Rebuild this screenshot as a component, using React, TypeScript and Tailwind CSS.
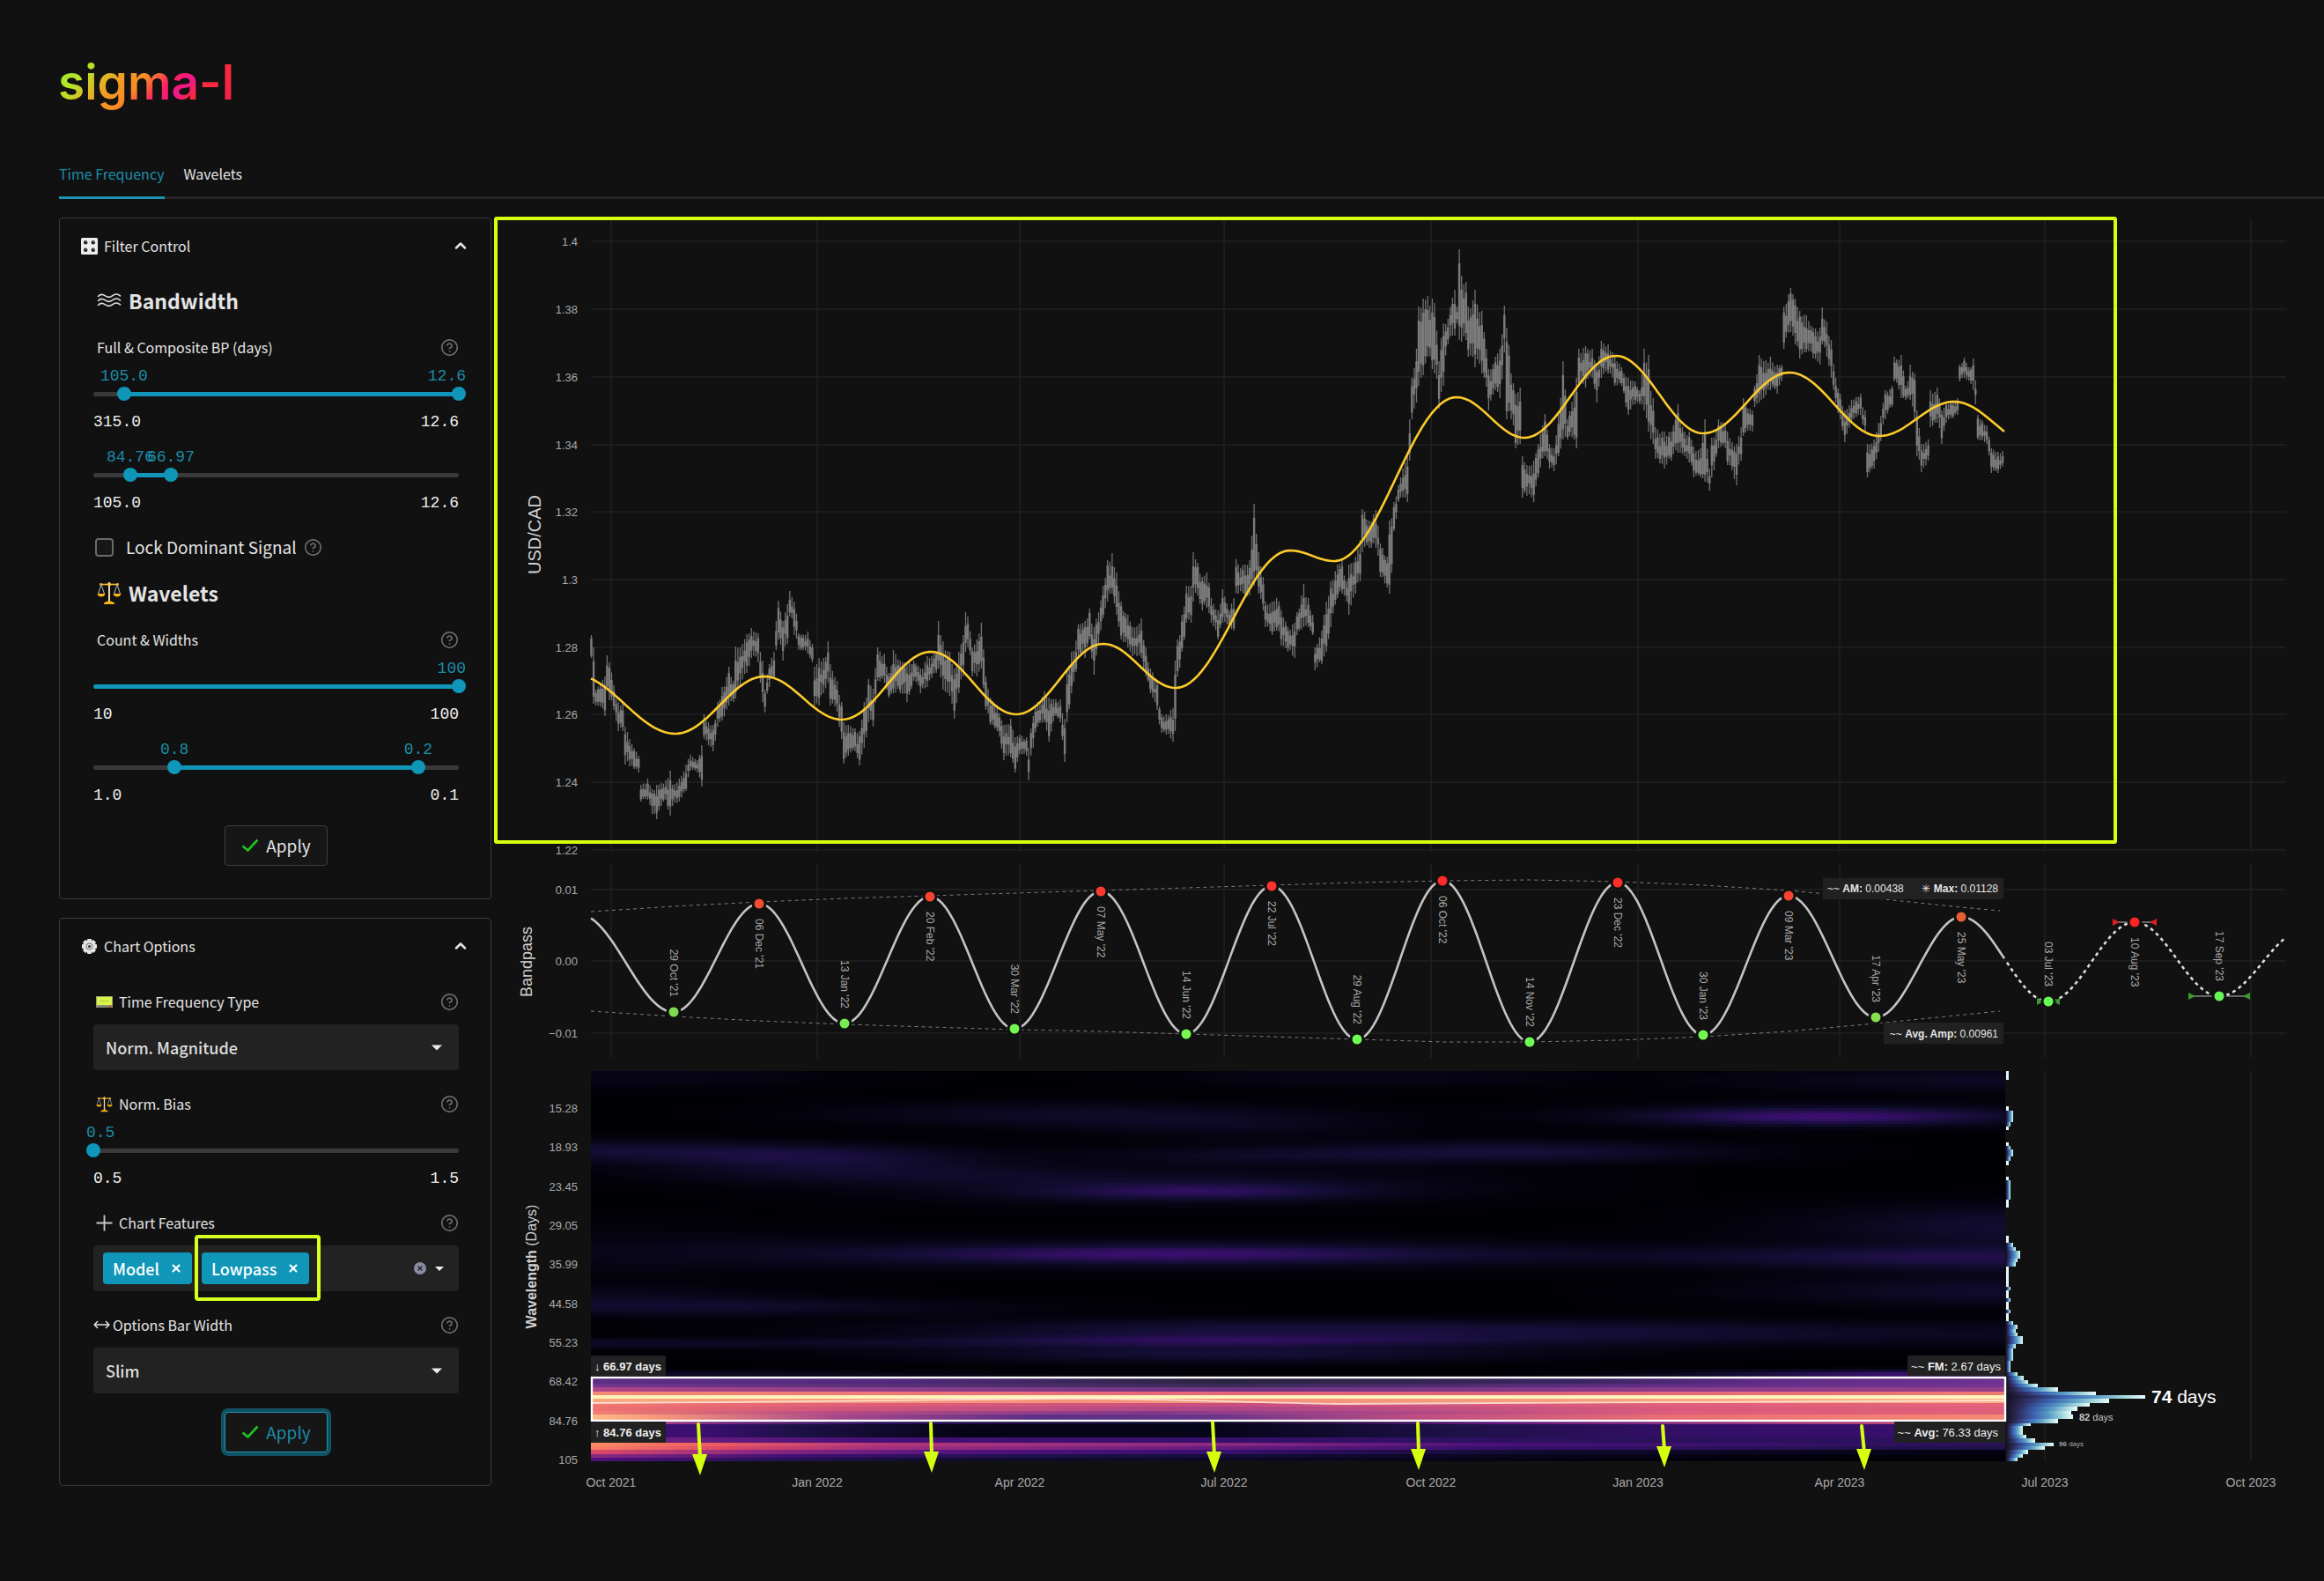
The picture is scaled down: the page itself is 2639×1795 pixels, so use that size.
import React, { useState } from 'react';
import { ChevronUp, HelpCircle, X } from 'lucide-react';

type Point = [number, number];

/* ------------------------------------------------------------------ */
/* chart data                                                          */
/* ------------------------------------------------------------------ */

const PLOT_LEFT = 671;
const PLOT_RIGHT = 2596;
const DATA_RIGHT = 2277;

const MONTHS: { x: number; label: string }[] = [
  { x: 694, label: 'Oct 2021' },
  { x: 928, label: 'Jan 2022' },
  { x: 1158, label: 'Apr 2022' },
  { x: 1390, label: 'Jul 2022' },
  { x: 1625, label: 'Oct 2022' },
  { x: 1860, label: 'Jan 2023' },
  { x: 2089, label: 'Apr 2023' },
  { x: 2322, label: 'Jul 2023' },
  { x: 2556, label: 'Oct 2023' },
];

const PRICE_TICKS: { y: number; label: string }[] = [
  { y: 274, label: '1.4' },
  { y: 351, label: '1.38' },
  { y: 428, label: '1.36' },
  { y: 505, label: '1.34' },
  { y: 581, label: '1.32' },
  { y: 658, label: '1.3' },
  { y: 735, label: '1.28' },
  { y: 811, label: '1.26' },
  { y: 888, label: '1.24' },
  { y: 965, label: '1.22' },
];

const BANDPASS_TICKS = [
  { y: 1010, label: '0.01' },
  { y: 1091, label: '0.00' },
  { y: 1173, label: '−0.01' },
];

const WAVELENGTH_TICKS = [
  { y: 1258, label: '15.28' },
  { y: 1302, label: '18.93' },
  { y: 1347, label: '23.45' },
  { y: 1391, label: '29.05' },
  { y: 1435, label: '35.99' },
  { y: 1480, label: '44.58' },
  { y: 1524, label: '55.23' },
  { y: 1568, label: '68.42' },
  { y: 1613, label: '84.76' },
  { y: 1657, label: '105' },
];

// x, high, low
const PRICE_RANGE: [number, number, number][] = [
  [671, 721, 747], [673, 735, 799], [677, 783, 801], [681, 776, 802], [686, 768, 813], [689, 744, 783],
  [693, 752, 795], [697, 778, 806], [701, 797, 830], [707, 797, 830], [711, 825, 868], [716, 839, 870],
  [725, 858, 877], [728, 891, 910], [736, 884, 908], [741, 896, 924], [745, 891, 930], [752, 889, 915],
  [756, 886, 908], [760, 875, 926], [763, 891, 915], [772, 884, 910], [779, 868, 898], [783, 857, 875],
  [792, 863, 877], [796, 846, 893], [800, 811, 839], [805, 820, 846], [811, 823, 853], [815, 797, 825],
  [821, 780, 818], [828, 757, 801], [832, 773, 797], [836, 734, 793], [841, 735, 778], [848, 720, 764],
  [854, 713, 747], [861, 719, 752], [865, 750, 797], [868, 783, 809], [873, 754, 780], [878, 740, 771],
  [882, 705, 738], [885, 682, 726], [889, 705, 750], [893, 686, 731], [898, 671, 700], [903, 683, 721],
  [908, 719, 738], [917, 717, 742], [922, 731, 752], [926, 757, 801], [930, 747, 801], [936, 747, 787],
  [941, 728, 775], [944, 754, 801], [950, 773, 808], [955, 797, 839], [958, 820, 867], [964, 823, 858],
  [970, 827, 853], [975, 830, 869], [982, 797, 849], [987, 771, 820], [992, 782, 825], [996, 735, 773],
  [1004, 742, 775], [1009, 764, 792], [1015, 738, 787], [1022, 750, 787], [1031, 752, 797], [1038, 750, 773],
  [1046, 759, 787], [1053, 745, 780], [1062, 740, 764], [1066, 705, 759], [1071, 728, 783], [1078, 740, 790],
  [1084, 759, 816], [1089, 740, 787], [1093, 721, 768], [1097, 695, 740], [1100, 700, 735], [1104, 735, 768],
  [1110, 726, 768], [1115, 707, 759], [1119, 768, 806], [1125, 792, 823], [1133, 801, 830], [1140, 823, 863],
  [1147, 816, 860], [1153, 837, 877], [1158, 834, 856], [1165, 837, 858], [1168, 849, 886], [1172, 813, 849],
  [1178, 797, 825], [1185, 785, 820], [1191, 792, 842], [1198, 794, 813], [1205, 794, 820], [1208, 816, 865],
  [1212, 761, 820], [1218, 740, 787], [1225, 709, 747], [1232, 705, 747], [1237, 691, 726], [1242, 712, 766],
  [1247, 695, 731], [1253, 665, 702], [1258, 636, 683], [1262, 628, 674], [1268, 650, 698], [1273, 683, 726],
  [1280, 698, 735], [1287, 712, 745], [1295, 702, 747], [1300, 735, 768], [1307, 759, 787], [1313, 773, 806],
  [1318, 811, 832], [1325, 811, 834], [1331, 804, 842], [1334, 750, 830], [1338, 726, 768], [1343, 698, 740],
  [1348, 665, 707], [1352, 665, 707], [1355, 627, 683], [1359, 639, 676], [1365, 655, 693], [1371, 650, 690],
  [1376, 679, 707], [1383, 693, 726], [1389, 669, 707], [1396, 693, 712], [1400, 679, 716], [1402, 627, 679],
  [1407, 641, 674], [1414, 641, 679], [1420, 636, 676], [1423, 572, 665], [1426, 606, 655], [1430, 627, 674],
  [1434, 655, 693], [1438, 683, 712], [1445, 683, 721], [1451, 679, 716], [1456, 693, 733], [1463, 712, 740],
  [1469, 707, 747], [1474, 695, 721], [1480, 663, 712], [1485, 679, 712], [1490, 698, 721], [1494, 735, 761],
  [1500, 716, 754], [1506, 683, 740], [1512, 660, 712], [1518, 641, 679], [1523, 634, 674], [1528, 660, 683],
  [1532, 641, 698], [1539, 632, 674], [1545, 613, 660], [1548, 578, 627], [1555, 591, 622], [1563, 579, 622],
  [1568, 617, 655], [1575, 632, 667], [1579, 591, 674], [1584, 570, 603], [1588, 551, 570], [1593, 532, 565],
  [1597, 514, 570], [1600, 476, 523], [1604, 429, 476], [1608, 396, 457], [1612, 348, 438], [1617, 339, 426],
  [1622, 336, 405], [1627, 339, 419], [1630, 344, 424], [1634, 410, 464], [1638, 367, 438], [1644, 362, 391],
  [1651, 329, 381], [1654, 348, 367], [1656, 283, 386], [1659, 313, 388], [1665, 320, 386], [1668, 348, 405],
  [1676, 329, 417], [1682, 353, 424], [1686, 377, 429], [1691, 419, 466], [1697, 405, 443], [1704, 396, 452],
  [1709, 347, 400], [1712, 372, 476], [1717, 424, 476], [1722, 447, 509], [1726, 440, 504], [1729, 518, 565],
  [1735, 528, 563], [1741, 523, 570], [1746, 504, 542], [1754, 470, 518], [1760, 504, 532], [1764, 509, 535],
  [1771, 471, 518], [1775, 410, 499], [1780, 476, 499], [1787, 447, 499], [1790, 429, 509], [1793, 396, 438],
  [1800, 393, 440], [1807, 396, 429], [1813, 414, 457], [1819, 387, 429], [1827, 391, 424], [1834, 403, 438],
  [1842, 417, 438], [1848, 429, 471], [1856, 433, 459], [1863, 443, 459], [1866, 396, 466], [1871, 403, 490],
  [1876, 452, 504], [1880, 485, 521], [1889, 490, 532], [1898, 490, 523], [1905, 459, 514], [1912, 490, 518],
  [1918, 490, 525], [1924, 507, 542], [1930, 509, 542], [1936, 476, 547], [1941, 532, 557], [1945, 497, 542],
  [1952, 476, 509], [1959, 481, 509], [1963, 490, 528], [1971, 504, 551], [1976, 485, 523], [1979, 452, 495],
  [1989, 466, 490], [1993, 438, 462], [1997, 403, 457], [2003, 410, 452], [2010, 405, 443], [2017, 414, 447],
  [2023, 414, 433], [2026, 348, 396], [2033, 327, 377], [2039, 339, 391], [2043, 353, 407], [2051, 358, 400],
  [2060, 372, 407], [2066, 372, 414], [2069, 349, 391], [2074, 365, 405], [2079, 386, 429], [2084, 429, 457],
  [2089, 447, 476], [2095, 466, 502], [2102, 454, 480], [2112, 447, 471], [2117, 466, 490], [2121, 504, 542],
  [2128, 499, 532], [2134, 480, 513], [2140, 443, 476], [2149, 438, 462], [2152, 405, 433], [2158, 403, 452],
  [2165, 438, 454], [2170, 414, 454], [2174, 424, 476], [2177, 466, 518], [2183, 504, 536], [2190, 499, 523],
  [2193, 443, 485], [2201, 440, 480], [2204, 466, 504], [2211, 457, 480], [2223, 452, 471], [2226, 414, 433],
  [2230, 406, 429], [2237, 417, 436], [2242, 407, 443], [2246, 471, 499], [2256, 483, 504], [2262, 509, 537],
  [2270, 513, 537], [2276, 511, 528],
];

const LOWPASS_TURNS: Point[] = [
  [652, 766], [767, 833], [868, 768], [956, 817], [1057, 740], [1154, 811], [1253, 731], [1335, 781],
  [1465, 625], [1515, 637], [1654, 451], [1731, 497], [1835, 404], [1934, 492], [2032, 423], [2134, 495],
  [2219, 456], [2310, 505],
];

interface Turn {
  x: number;
  y: number;
  date: string;
  kind: 'peak' | 'trough';
  color: string;
  spread?: number;
}

const TURNS: Turn[] = [
  { x: 765, y: 1149, date: "29 Oct '21", kind: 'trough', color: '#7fdc50' },
  { x: 862, y: 1026, date: "06 Dec '21", kind: 'peak', color: '#f0502f' },
  { x: 959, y: 1162, date: "13 Jan '22", kind: 'trough', color: '#78ec50' },
  { x: 1056, y: 1018, date: "20 Feb '22", kind: 'peak', color: '#f8442f' },
  { x: 1152, y: 1168, date: "30 Mar '22", kind: 'trough', color: '#75f550' },
  { x: 1250, y: 1012, date: "07 May '22", kind: 'peak', color: '#fb3b2e' },
  { x: 1347, y: 1174, date: "14 Jun '22", kind: 'trough', color: '#74f951' },
  { x: 1444, y: 1006, date: "22 Jul '22", kind: 'peak', color: '#fd332d' },
  { x: 1541, y: 1180, date: "29 Aug '22", kind: 'trough', color: '#70fd52' },
  { x: 1638, y: 1000, date: "06 Oct '22", kind: 'peak', color: '#ff2a2a' },
  { x: 1737, y: 1183, date: "14 Nov '22", kind: 'trough', color: '#6dff55' },
  { x: 1837, y: 1002, date: "23 Dec '22", kind: 'peak', color: '#fe2e2b' },
  { x: 1934, y: 1175, date: "30 Jan '23", kind: 'trough', color: '#74f951' },
  { x: 2031, y: 1017, date: "09 Mar '23", kind: 'peak', color: '#f8442f' },
  { x: 2130, y: 1155, date: "17 Apr '23", kind: 'trough', color: '#85e050' },
  { x: 2227, y: 1041, date: "25 May '23", kind: 'peak', color: '#e65f35' },
  { x: 2326, y: 1137, date: "03 Jul '23", kind: 'trough', color: '#66ff55', spread: 10 },
  { x: 2424, y: 1047, date: "10 Aug '23", kind: 'peak', color: '#ff2222', spread: 22 },
  { x: 2520, y: 1131, date: "17 Sep '23", kind: 'trough', color: '#66f555', spread: 32 },
];

const BANDPASS_WAVE: Point[] = [
  [657, 1038],
  ...TURNS.map((t): Point => [t.x, t.y]),
  [2618, 1055],
];

const ENVELOPE_TOP =
  'M671 1035 L765 1029 L862 1024 L959 1020 L1056 1017 L1152 1014 L1250 1011 L1347 1008 L1444 1005 L1541 1002 L1640 1000 L1737 999 L1837 1001 L1934 1005 L2030 1011 L2130 1020 L2227 1030 L2271 1034';
const ENVELOPE_BOTTOM =
  'M671 1148 L765 1154 L862 1159 L959 1163 L1056 1166 L1152 1169 L1250 1171 L1347 1174 L1444 1177 L1541 1180 L1640 1183 L1737 1183 L1837 1181 L1934 1177 L2030 1171 L2130 1162 L2271 1148';

// cx, cy, rx, ry, strength
const BLOBS: [number, number, number, number, number][] = [
  [640, 1306, 260, 12, 0.09],
  [920, 1314, 180, 13, 0.1],
  [980, 1332, 240, 12, 0.06],
  [1180, 1265, 240, 14, 0.06],
  [1400, 1276, 180, 16, 0.05],
  [1420, 1312, 200, 10, 0.05],
  [1330, 1347, 330, 20, 0.07],
  [1360, 1353, 160, 9, 0.11],
  [1350, 1424, 500, 17, 0.08],
  [1320, 1424, 280, 9, 0.12],
  [2120, 1427, 320, 11, 0.06],
  [1390, 1522, 300, 7, 0.13],
  [1420, 1509, 380, 11, 0.1],
  [1390, 1537, 340, 10, 0.1],
  [1860, 1514, 280, 14, 0.07],
  [780, 1484, 320, 10, 0.08],
  [671, 1470, 200, 12, 0.04],
  [2070, 1268, 180, 9, 0.15],
  [2080, 1266, 280, 14, 0.06],
  [1720, 1308, 240, 12, 0.1],
  [2300, 1392, 250, 24, 0.09],
  [2300, 1430, 260, 16, 0.08],
  [2300, 1466, 300, 16, 0.08],
  [2300, 1515, 280, 14, 0.05],
  [700, 1222, 240, 14, 0.04],
  [1550, 1223, 220, 12, 0.04],
  [2280, 1226, 320, 14, 0.06],
  [671, 1525, 460, 6, 0.07],
  [671, 1560, 440, 4, 0.07],
  [2200, 1561, 260, 5, 0.22],
  [671, 1420, 300, 30, 0.03],
];

const MAGMA: [number, number, number][] = [
  [0, 0, 4],
  [20, 14, 54],
  [59, 15, 112],
  [100, 26, 128],
  [140, 41, 129],
];

// bottom of the scalogram, row by row: y0, y1, colour stops by x
const HEAT_ROWS: { y0: number; y1: number; stops: [number, string][] }[] = [
  { y0: 1563, y1: 1571, stops: [[671, '#5d2f82'], [1000, '#52297f'], [1390, '#2b2540'], [1800, '#3c2663'], [2000, '#5f2b86'], [2277, '#6e3290']] },
  { y0: 1571, y1: 1575, stops: [[671, '#713690'], [1390, '#3b2a58'], [1900, '#602d86'], [2277, '#74358f']] },
  { y0: 1575, y1: 1580, stops: [[671, '#b04587'], [1000, '#8f3f8a'], [1390, '#6a3484'], [1900, '#8a3c8b'], [2277, '#963f8b']] },
  { y0: 1580, y1: 1584, stops: [[671, '#f58a72'], [1300, '#e8677a'], [1700, '#e0607a'], [2277, '#ee7a72']] },
  { y0: 1584, y1: 1588, stops: [[671, '#fff3ba'], [2277, '#fff5bc']] },
  { y0: 1588, y1: 1593, stops: [[671, '#f9a97f'], [1100, '#f6937a'], [1500, '#f3957b'], [2277, '#fbb183']] },
  { y0: 1593, y1: 1597, stops: [[671, '#f1776f'], [1000, '#dd5d78'], [1390, '#c74d80'], [1900, '#e0607a'], [2277, '#e4647a']] },
  { y0: 1597, y1: 1602, stops: [[671, '#f0736e'], [950, '#d2567b'], [1390, '#ac4688'], [1900, '#d95a7c'], [2277, '#df5f7b']] },
  { y0: 1602, y1: 1606, stops: [[671, '#f38070'], [950, '#b44b85'], [1300, '#85398b'], [1500, '#a04289'], [1900, '#dd5d7b'], [2277, '#e0607a']] },
  { y0: 1606, y1: 1614, stops: [[671, '#fdbb87'], [760, '#f5917a'], [950, '#a8478a'], [1180, '#5b2f86'], [1380, '#693589'], [1600, '#bd4c83'], [1900, '#ea6e72'], [2277, '#f58972']] },
  { y0: 1614, y1: 1617, stops: [[671, '#d0507c'], [820, '#7a2a80'], [1000, '#2b1160'], [1390, '#0a0722'], [1700, '#641a80'], [2000, '#9e3a7c'], [2277, '#d0506f']] },
  { y0: 1617, y1: 1632, stops: [[671, '#451077'], [800, '#3b0f70'], [900, '#1d1147'], [1100, '#050414'], [1390, '#07051b'], [1650, '#1d1147'], [1900, '#330f66'], [2277, '#3b0f70']] },
  { y0: 1632, y1: 1638, stops: [[671, '#7a2482'], [1000, '#451077'], [1390, '#35106b'], [1800, '#2a115c'], [2277, '#2c115f']] },
  { y0: 1638, y1: 1642, stops: [[671, '#fd8d66'], [800, '#ee5e5f'], [1000, '#b63679'], [1390, '#8c2981'], [1700, '#4a1079'], [2277, '#271258']] },
  { y0: 1642, y1: 1646, stops: [[671, '#fc8161'], [820, '#de4968'], [1000, '#a1307e'], [1390, '#641a80'], [1700, '#35106b'], [2277, '#1d1147']] },
  { y0: 1646, y1: 1651, stops: [[671, '#de4968'], [850, '#8c2981'], [1100, '#51127c'], [1390, '#37106d'], [1750, '#100b2c'], [2277, '#040312']] },
  { y0: 1651, y1: 1655, stops: [[671, '#8c2981'], [900, '#3f0f72'], [1200, '#1d1147'], [1700, '#080620'], [2277, '#020109']] },
  { y0: 1655, y1: 1659, stops: [[671, '#51127c'], [850, '#2c115f'], [1050, '#120d32'], [1390, '#0c0926'], [1900, '#020109'], [2277, '#010107']] },
];

// y0, y1, right edge
const POWER_BARS: [number, number, number][] = [
  [1216, 1226, 2281], [1256, 1261, 2281], [1261, 1274, 2286], [1274, 1279, 2283], [1279, 1283, 2281],
  [1297, 1301, 2281], [1301, 1305, 2283], [1305, 1313, 2286], [1313, 1318, 2283], [1318, 1323, 2281],
  [1336, 1340, 2281], [1340, 1362, 2283], [1362, 1371, 2281], [1403, 1411, 2281], [1411, 1416, 2286],
  [1416, 1420, 2289], [1420, 1429, 2294], [1429, 1433, 2291], [1433, 1438, 2289], [1438, 1461, 2281],
  [1461, 1465, 2283], [1465, 1474, 2281], [1474, 1478, 2283], [1478, 1487, 2281], [1487, 1491, 2283],
  [1491, 1500, 2281], [1500, 1504, 2286], [1504, 1509, 2291], [1509, 1513, 2289], [1513, 1517, 2291],
  [1517, 1526, 2297], [1526, 1531, 2289], [1531, 1545, 2286], [1545, 1558, 2283], [1558, 1562, 2291],
  [1562, 1567, 2298], [1567, 1571, 2303], [1571, 1575, 2314], [1575, 1580, 2337], [1580, 1584, 2380],
  [1584, 1588, 2436], [1588, 1593, 2395], [1593, 1597, 2373], [1597, 1602, 2359], [1602, 1606, 2352],
  [1606, 1611, 2354], [1611, 1616, 2337], [1616, 1619, 2306], [1619, 1629, 2297], [1629, 1633, 2301],
  [1633, 1638, 2311], [1638, 1642, 2332], [1642, 1646, 2322], [1646, 1651, 2303], [1651, 1655, 2297],
  [1655, 1659, 2291],
];

const ARROWS: { x: number; y: number; tipX: number; tipY: number }[] = [
  { x: 793, y: 1617, tipX: 795, tipY: 1675 },
  { x: 1057, y: 1616, tipX: 1058, tipY: 1672 },
  { x: 1377, y: 1615, tipX: 1379, tipY: 1672 },
  { x: 1610, y: 1616, tipX: 1611, tipY: 1669 },
  { x: 1888, y: 1619, tipX: 1890, tipY: 1666 },
  { x: 2114, y: 1619, tipX: 2117, tipY: 1669 },
];

/* ------------------------------------------------------------------ */
/* chart helpers                                                       */
/* ------------------------------------------------------------------ */

// half-cosine between turning points, clipped to [from, to]
const wavePath = (turns: Point[], from: number, to: number) => {
  const cmds: string[] = [];
  for (let x = from; x <= to; x += 3) {
    const i = Math.min(
      turns.length - 2,
      Math.max(0, turns.findIndex((t) => t[0] > x) - 1),
    );
    const [x0, y0] = turns[i];
    const [x1, y1] = turns[i + 1];
    const k = (1 - Math.cos((Math.PI * (x - x0)) / (x1 - x0))) / 2;
    cmds.push(`${cmds.length ? 'L' : 'M'}${x} ${(y0 + (y1 - y0) * k).toFixed(1)}`);
  }
  return cmds.join(' ');
};

const noise = (n: number) => {
  const v = Math.sin(n * 127.1 + 11.7) * 43758.5453;
  return v - Math.floor(v);
};

const buildCandles = () => {
  const wicks: string[] = [];
  const bodies: string[] = [];
  let seg = 0;
  let n = 0;
  for (let x = PLOT_LEFT + 0.5; x <= 2276; x += 2.56) {
    while (seg < PRICE_RANGE.length - 2 && PRICE_RANGE[seg + 1][0] < x) seg++;
    const [x0, h0, l0] = PRICE_RANGE[seg];
    const [x1, h1, l1] = PRICE_RANGE[seg + 1];
    // take a known bar as it is when one falls on this slot
    const near = x - x0 < 1.28 ? 0 : x1 - x <= 1.28 ? 1 : -1;
    const k = near >= 0 ? near : (x - x0) / (x1 - x0);
    const hi = h0 + (h1 - h0) * k;
    const lo = l0 + (l1 - l0) * k;
    const span = lo - hi;
    const jitter = near >= 0 ? 0 : 0.14;
    const top = hi + span * jitter * noise(n);
    const bottom = lo - span * jitter * noise(n + 500);
    const bodyTop = top + Math.min(16, span * (0.12 + 0.25 * noise(n + 900)));
    const bodyBottom = Math.max(bodyTop + 2, bottom - Math.min(16, span * (0.08 + 0.25 * noise(n + 1300))));
    wicks.push(`M${x.toFixed(1)} ${top.toFixed(1)}V${bottom.toFixed(1)}`);
    bodies.push(`M${x.toFixed(1)} ${bodyTop.toFixed(1)}V${bodyBottom.toFixed(1)}`);
    n++;
  }
  return { wicks: wicks.join(''), bodies: bodies.join('') };
};

const magma = (value: number) => {
  const v = Math.min(3.999, Math.max(0, value * 10));
  const i = Math.floor(v);
  const k = v - i;
  const c = MAGMA[i].map((a, j) => Math.round(a + (MAGMA[i + 1][j] - a) * k));
  return `rgb(${c[0]},${c[1]},${c[2]})`;
};

const heatAt = (x: number, y: number) =>
  BLOBS.reduce((sum, [cx, cy, rx, ry, a]) => {
    const dx = (x - cx) / rx;
    const dy = (y - cy) / ry;
    return sum + a * Math.exp(-dx * dx - dy * dy);
  }, 0);

const HEAT_STEP = 3;
const SMOOTH_ROWS = Array.from({ length: Math.ceil((1563 - 1216) / HEAT_STEP) }, (_, r) => {
  const y = 1216 + r * HEAT_STEP;
  const stops = Array.from({ length: 25 }, (__, i) => {
    const x = PLOT_LEFT + ((DATA_RIGHT - PLOT_LEFT) * i) / 24;
    return { offset: i / 24, color: magma(heatAt(x, y + HEAT_STEP / 2)) };
  });
  return { y, stops };
});

const candles = buildCandles();

/* ------------------------------------------------------------------ */
/* chart                                                               */
/* ------------------------------------------------------------------ */

const Grid = () => (
  <g stroke="#212121" strokeWidth="1.5">
    {MONTHS.map(({ x }) => (
      <g key={x}>
        <path d={`M${x} 248V967`} />
        <path d={`M${x} 981V1201`} />
        {x > DATA_RIGHT && <path d={`M${x} 1216V1659`} />}
      </g>
    ))}
    {[...PRICE_TICKS, ...BANDPASS_TICKS].map(({ y }) => (
      <path key={y} d={`M${PLOT_LEFT} ${y}H${PLOT_RIGHT}`} />
    ))}
  </g>
);

const AxisLabels = () => (
  <g fill="#a9a9a9" fontSize="13">
    {[...PRICE_TICKS, ...BANDPASS_TICKS, ...WAVELENGTH_TICKS].map(({ y, label }) => (
      <text key={label} x="656" y={y + 5} textAnchor="end">
        {label}
      </text>
    ))}
    {MONTHS.map(({ x, label }) => (
      <text key={label} x={x} y="1688" textAnchor="middle" fontSize="14">
        {label}
      </text>
    ))}
    <g fill="#d0d0d0" textAnchor="middle">
      <text transform="translate(614 607) rotate(-90)" fontSize="20">USD/CAD</text>
      <text transform="translate(604 1092) rotate(-90)" fontSize="18">Bandpass</text>
      <text transform="translate(609 1438) rotate(-90)" fontSize="16">
        <tspan fontWeight="700">Wavelength</tspan> (Days)
      </text>
    </g>
  </g>
);

const PricePanel = () => (
  <g fill="none">
    <path d={candles.wicks} stroke="#727272" strokeWidth="1.3" />
    <path d={candles.bodies} stroke="#7c7c7c" strokeWidth="2.4" />
    <path d={wavePath(LOWPASS_TURNS, 671, 2276)} stroke="#fccb2b" strokeWidth="2.6" strokeLinejoin="round" />
  </g>
);

const BandpassPanel = () => (
  <g>
    <g fill="none" stroke="#7c7c7c" strokeWidth="1" strokeDasharray="4 4">
      <path d={ENVELOPE_TOP} />
      <path d={ENVELOPE_BOTTOM} />
    </g>
    <path d={wavePath(BANDPASS_WAVE, 671, 2278)} fill="none" stroke="#c4c4c4" strokeWidth="2.6" />
    <path
      d={wavePath(BANDPASS_WAVE, 2279, 2595)}
      fill="none"
      stroke="#dcdcdc"
      strokeWidth="2.6"
      strokeDasharray="4 4"
    />
    {TURNS.map(({ x, y, date, kind, color, spread }) => (
      <g key={date}>
        {spread && (
          <g fill={kind === 'peak' ? '#dd1f1f' : '#3c9a2c'}>
            <path d={`M${x - spread} ${y}H${x + spread}`} stroke="#bdbdbd" />
            <path d={`M${x - spread + 5} ${y}l-8 -4v8z`} />
            <path d={`M${x + spread - 5} ${y}l8 -4v8z`} />
          </g>
        )}
        <circle cx={x} cy={y} r="7" fill={color} stroke="#111111" strokeWidth="3" />
        <text
          transform={`translate(${x - 4} ${kind === 'peak' ? y + 17 : y - 17}) rotate(90)`}
          textAnchor={kind === 'peak' ? 'start' : 'end'}
          fill="#a8a8a8"
          fontSize="12"
        >
          {date}
        </text>
      </g>
    ))}
    <g fill="#e6e6e6" fontSize="12">
      <rect x="2070" y="997" width="205" height="24" fill="#212121" />
      <text x="2075" y="1013">
        ~~ <tspan fontWeight="700">AM:</tspan> 0.00438
      </text>
      <text x="2269" y="1013" textAnchor="end">
        ✳ <tspan fontWeight="700">Max:</tspan> 0.01128
      </text>
      <rect x="2139" y="1161" width="136" height="24" fill="#212121" />
      <text x="2269" y="1178" textAnchor="end">
        ~~ <tspan fontWeight="700">Avg. Amp:</tspan> 0.00961
      </text>
    </g>
  </g>
);

const Scalogram = () => (
  <g>
    <defs>
      {SMOOTH_ROWS.map(({ y, stops }) => (
        <linearGradient key={y} id={`smooth-${y}`}>
          {stops.map(({ offset, color }) => (
            <stop key={offset} offset={offset} stopColor={color} />
          ))}
        </linearGradient>
      ))}
      {HEAT_ROWS.map(({ y0, stops }) => (
        <linearGradient key={y0} id={`heat-${y0}`} gradientUnits="userSpaceOnUse" x1={PLOT_LEFT} x2={DATA_RIGHT}>
          {stops.map(([x, color]) => (
            <stop key={x} offset={(x - PLOT_LEFT) / (DATA_RIGHT - PLOT_LEFT)} stopColor={color} />
          ))}
        </linearGradient>
      ))}
      <linearGradient id="ice">
        <stop offset="0" stopColor="#15121f" />
        <stop offset="0.2" stopColor="#302f62" />
        <stop offset="0.42" stopColor="#3b62b0" />
        <stop offset="0.65" stopColor="#5a9cc6" />
        <stop offset="0.85" stopColor="#a5d8dd" />
        <stop offset="1" stopColor="#eafcfd" />
      </linearGradient>
    </defs>
    <g shapeRendering="crispEdges">
      {SMOOTH_ROWS.map(({ y }) => (
        <rect key={y} x={PLOT_LEFT} y={y} width={DATA_RIGHT - PLOT_LEFT} height={HEAT_STEP} fill={`url(#smooth-${y})`} />
      ))}
      {HEAT_ROWS.map(({ y0, y1 }) => (
        <rect key={y0} x={PLOT_LEFT} y={y0} width={DATA_RIGHT - PLOT_LEFT} height={y1 - y0} fill={`url(#heat-${y0})`} />
      ))}
      {POWER_BARS.map(([y0, y1, right]) => (
        <rect key={y0} x="2278" y={y0} width={right - 2278} height={y1 - y0} fill={right < 2282 ? '#e4f6f8' : 'url(#ice)'} />
      ))}
    </g>
    <path
      d="M671 1593C850 1592 1050 1590 1190 1588C1300 1587 1400 1592 1520 1594C1700 1595 1900 1592 2277 1590"
      fill="none"
      stroke="#ffe9dc"
      strokeOpacity="0.85"
      strokeWidth="1.8"
    />
    <rect x="672" y="1564" width="1605" height="49" fill="none" stroke="#ffffff" strokeWidth="2.4" />
    <g fill="#eeeeee" fontSize="13">
      <rect x="671" y="1539" width="85" height="23" fill="#212121" />
      <text x="675" y="1556" fontWeight="700">↓ 66.97 days</text>
      <rect x="671" y="1614" width="85" height="24" fill="#212121" />
      <text x="675" y="1631" fontWeight="700">↑ 84.76 days</text>
      <rect x="2166" y="1539" width="111" height="23" fill="#212121" />
      <text x="2272" y="1556" textAnchor="end">
        ~~ <tspan fontWeight="700">FM:</tspan> 2.67 days
      </text>
      <rect x="2151" y="1614" width="126" height="24" fill="#212121" />
      <text x="2269" y="1631" textAnchor="end">
        ~~ <tspan fontWeight="700">Avg:</tspan> 76.33 days
      </text>
    </g>
    <text x="2443" y="1593" fill="#ffffff" fontSize="21">
      <tspan fontWeight="700">74</tspan> days
    </text>
    <text x="2361" y="1613" fill="#c4c4c4" fontSize="11">
      <tspan fontWeight="700">82</tspan> days
    </text>
    <text x="2338" y="1642" fill="#a6a6a6" fontSize="8">
      <tspan fontWeight="700">96</tspan> days
    </text>
  </g>
);

const Annotations = () => (
  <g fill="#d6ff0f">
    <rect x="563" y="248" width="1839" height="708" rx="1" fill="none" stroke="#d6ff0f" strokeWidth="4" />
    {ARROWS.map(({ x, y, tipX, tipY }) => (
      <g key={x}>
        <path d={`M${x} ${y}L${tipX} ${tipY - 20}`} stroke="#d6ff0f" strokeWidth="4" strokeLinecap="round" />
        <path d={`M${tipX} ${tipY}l-9 -24h17z`} />
      </g>
    ))}
  </g>
);

const SignalChart = () => (
  <svg
    viewBox="558 246 2081 1460"
    className="block w-full font-['Liberation_Sans',Arial,sans-serif]"
    role="img"
    aria-label="USD/CAD time frequency analysis"
  >
    <Grid />
    <AxisLabels />
    <PricePanel />
    <BandpassPanel />
    <Scalogram />
    <Annotations />
  </svg>
);

/* ------------------------------------------------------------------ */
/* icons                                                               */
/* ------------------------------------------------------------------ */

const KnobsIcon = () => (
  <svg className="h-[19px] w-[19px]" viewBox="0 0 19 19">
    <rect width="19" height="19" rx="1.5" fill="#ededed" />
    {[5.2, 13.8].map((cx) =>
      [5.2, 13.8].map((cy) => (
        <g key={`${cx}-${cy}`}>
          <circle cx={cx} cy={cy} r="2.2" fill="#1b1b1b" />
          <path d={`M${cx} ${cy}l1.4 -1.6`} stroke="#ededed" strokeWidth="0.8" />
        </g>
      )),
    )}
  </svg>
);

const GearIcon = () => (
  <svg className="h-[19px] w-[19px]" viewBox="0 0 19 19">
    <g fill="#e6e6e6">
      {[0, 45, 90, 135].map((a) => (
        <rect key={a} x="7" y="1" width="5" height="17" rx="1" transform={`rotate(${a} 9.5 9.5)`} />
      ))}
      <circle cx="9.5" cy="9.5" r="6.6" />
    </g>
    <circle cx="9.5" cy="9.5" r="3.4" fill="none" stroke="#8a8a8a" strokeWidth="1.4" />
    <circle cx="9.5" cy="9.5" r="1.5" fill="#2b2b2b" />
  </svg>
);

const WavesIcon = () => (
  <svg className="h-7 w-7" viewBox="0 0 28 28" fill="none" stroke="#dcdcdc" strokeWidth="1.6" strokeLinecap="round">
    {[9.5, 14.5, 19.5].map((y) => (
      <path key={y} d={`M1.5 ${y}c3 -3.6 5.5 -2.4 8 -0.6s5 2.4 8 0s6 -2.6 9 0`} />
    ))}
  </svg>
);

const ScalesIcon = ({ className }: { className: string }) => (
  <svg className={className} viewBox="0 0 28 28" fill="none">
    <path d="M3 4.5H25" stroke="#f2c14e" strokeWidth="1.6" />
    <path d="M14 2V24" stroke="#f0dba6" strokeWidth="2" />
    <path d="M5 4.5L1.6 15M5 4.5L8.4 15M23 4.5L19.6 15M23 4.5L26.4 15" stroke="#b9b9b9" strokeWidth="1" />
    <path d="M0.6 15H9.4C9 19.8 1 19.8 0.6 15ZM18.6 15H27.4C27 19.8 19 19.8 18.6 15Z" fill="#fcb316" />
    <path d="M8 27V25.4L12 23.4H16L20 25.4V27Z" fill="#fcb316" />
    <circle cx="14" cy="4.4" r="2" fill="#fcc94a" />
    <circle cx="4.6" cy="4.4" r="1.3" fill="#fcb316" />
    <circle cx="23.4" cy="4.4" r="1.3" fill="#fcb316" />
  </svg>
);

const SpectrumIcon = () => (
  <svg className="h-[19px] w-[19px]" viewBox="0 0 19 19">
    <rect x="0" y="3" width="19" height="13" fill="#9c9f6a" />
    <rect x="1" y="4" width="17" height="9" fill="#d9f24c" />
    <path d="M4 8.5H15" stroke="#b5cc35" strokeWidth="1" />
    <path d="M0.5 14.6H18.5" stroke="#7c7f80" strokeWidth="1.8" />
    <rect x="14" y="14" width="3" height="1.4" fill="#c2452d" />
  </svg>
);

const PlusIcon = () => (
  <svg className="h-[19px] w-[19px]" viewBox="0 0 19 19">
    <path d="M9.5 0.5V18.5M0.5 9.5H18.5" stroke="#c9c9c9" strokeWidth="1.8" />
  </svg>
);

const WidthIcon = () => (
  <svg className="-mr-1 h-[12px] w-[19px]" viewBox="0 0 19 12" fill="none" stroke="#e2e2e2" strokeWidth="1.5">
    <path d="M1 6H18M5 2L1.2 6L5 10M14 2L17.8 6L14 10" />
  </svg>
);

const CheckIcon = () => (
  <svg className="h-5 w-5" viewBox="0 0 20 20" fill="none">
    <path d="M1.5 10.5L7.5 15.5L18.5 3.5" stroke="#1fc41f" strokeWidth="2.6" />
  </svg>
);

const CaretIcon = ({ className = 'w-3' }: { className?: string }) => (
  <svg className={`h-[7px] ${className}`} viewBox="0 0 12 7">
    <path d="M0 0.5H12L6 6.5Z" fill="#ececec" />
  </svg>
);

/* ------------------------------------------------------------------ */
/* controls                                                            */
/* ------------------------------------------------------------------ */

interface Handle {
  name: string;
  text: string;
  position: number;
  align?: 'start' | 'center' | 'end';
}

interface SliderProps {
  handles: Handle[];
  min: string;
  max: string;
}

const VALUE_ALIGN = {
  start: 'left-0',
  center: '-translate-x-1/2',
  end: 'right-0',
};

const Slider: React.FC<SliderProps> = ({ handles, min, max }) => {
  const [positions, setPositions] = useState(handles.map((h) => h.position));
  const start = handles.length > 1 ? Math.min(...positions) : 0;
  const end = Math.max(...positions);

  return (
    <div className="font-['Liberation_Mono',monospace] text-lg leading-6">
      <div className="relative -mx-2 h-6 text-[#1c8ba8]">
        <div className="relative mx-2 h-6">
          {handles.map((h, i) =>
            !h.align || h.align === 'center' ? (
              <output
                key={h.name}
                className={`absolute ${VALUE_ALIGN.center}`}
                style={{ left: `${positions[i]}%` }}
              >
                {h.text}
              </output>
            ) : null,
          )}
        </div>
        {handles.map((h) =>
          h.align && h.align !== 'center' ? (
            <output key={h.name} className={`absolute top-0 ${VALUE_ALIGN[h.align]}`}>
              {h.text}
            </output>
          ) : null,
        )}
      </div>
      <div className="relative flex h-4 items-center">
        <div className="h-[5px] w-full overflow-hidden rounded-full bg-[#3a3a3a]">
          <div
            className="h-full bg-[#0f96b8]"
            style={{ marginLeft: `${start}%`, width: `${end - start}%` }}
          />
        </div>
        <div className="absolute -inset-x-2 inset-y-0">
          {handles.map((h, i) => (
            <input
              key={h.name}
              type="range"
              aria-label={h.name}
              min={0}
              max={100}
              step="any"
              value={positions[i]}
              onChange={(e) =>
                setPositions(positions.map((p, j) => (j === i ? Number(e.target.value) : p)))
              }
              className="pointer-events-none absolute inset-0 m-0 h-4 w-full appearance-none bg-transparent [&::-webkit-slider-thumb]:pointer-events-auto [&::-webkit-slider-thumb]:h-4 [&::-webkit-slider-thumb]:w-4 [&::-webkit-slider-thumb]:appearance-none [&::-webkit-slider-thumb]:rounded-full [&::-webkit-slider-thumb]:bg-[#0f96b8]"
            />
          ))}
        </div>
      </div>
      <div className="mt-3 flex h-6 justify-between text-[#f0f0f0]">
        <span>{min}</span>
        <span>{max}</span>
      </div>
    </div>
  );
};

const HelpButton = ({ topic }: { topic: string }) => (
  <button type="button" aria-label={`Help: ${topic}`} className="text-[#6a6a6a]">
    <HelpCircle className="h-[21px] w-[21px]" strokeWidth={2} />
  </button>
);

interface FieldLabelProps {
  text: string;
  htmlFor?: string;
  icon?: React.ReactNode;
  className?: string;
}

const FieldLabel: React.FC<FieldLabelProps> = ({ text, htmlFor, icon, className = '' }) => (
  <div className={`flex h-6 items-center justify-between ${className}`}>
    <label htmlFor={htmlFor} className="flex items-center gap-[7px] text-base leading-6">
      {icon}
      {text}
    </label>
    <HelpButton topic={text} />
  </div>
);

const SectionTitle = ({ text, icon }: { text: string; icon: React.ReactNode }) => (
  <h2 className="flex h-9 items-center gap-2 pl-1 text-[23px] leading-9 font-bold">
    {icon}
    {text}
  </h2>
);

interface SelectProps {
  id: string;
  options: string[];
}

const Select: React.FC<SelectProps> = ({ id, options }) => (
  <div className="relative mt-[14px]">
    <select
      id={id}
      className="block h-[52px] w-full appearance-none rounded bg-[#222222] px-[14px] text-lg font-medium text-[#dddddd]"
    >
      {options.map((option) => (
        <option key={option}>{option}</option>
      ))}
    </select>
    <CaretIcon className="pointer-events-none absolute top-[23px] right-[19px] w-3" />
  </div>
);

const ApplyButton = ({ focused = false }: { focused?: boolean }) => (
  <button
    type="button"
    className={`mx-auto flex h-[46px] items-center gap-2 rounded border bg-[#161616] px-[18px] text-[19px] leading-6 ${
      focused ? 'border-[#2391ad] text-[#1c8ba8] ring-4 ring-[#105264]' : 'border-[#3d3d3d]'
    }`}
  >
    <CheckIcon />
    Apply
  </button>
);

const FeatureTag = ({ name, onRemove }: { name: string; onRemove: () => void }) => (
  <span className="flex h-9 items-center gap-3 rounded bg-[#0f96b8] px-[11px] text-lg leading-6 font-medium text-white">
    {name}
    <button type="button" aria-label={`Remove ${name}`} onClick={onRemove}>
      <X className="h-[14px] w-[14px]" strokeWidth={3.6} />
    </button>
  </span>
);

interface PanelProps {
  title: string;
  icon: React.ReactNode;
  children: React.ReactNode;
}

const Panel: React.FC<PanelProps> = ({ title, icon, children }) => (
  <section className="rounded border border-[#3a3a3a] pb-[37px]">
    <button type="button" aria-expanded="true" className="flex h-[62px] w-full items-center justify-between pr-6 pl-6">
      <span className="flex items-center gap-[7px] text-base leading-6">
        {icon}
        {title}
      </span>
      <ChevronUp className="h-5 w-5" strokeWidth={3} />
    </button>
    <div className="pr-9 pl-[38px]">{children}</div>
  </section>
);

const FilterControl = () => (
  <Panel title="Filter Control" icon={<KnobsIcon />}>
    <div className="pt-[13px]">
      <SectionTitle text="Bandwidth" icon={<WavesIcon />} />
    </div>
    <FieldLabel text="Full & Composite BP (days)" className="mt-[23px] mb-[9px] pl-1" />
    <Slider
      min="315.0"
      max="12.6"
      handles={[
        { name: 'Full bandpass high', text: '105.0', position: 8.4 },
        { name: 'Full bandpass low', text: '12.6', position: 100, align: 'end' },
      ]}
    />
    <div className="mt-4">
      <Slider
        min="105.0"
        max="12.6"
        handles={[
          { name: 'Composite bandpass high', text: '84.76', position: 10.1 },
          { name: 'Composite bandpass low', text: '66.97', position: 21.2 },
        ]}
      />
    </div>
    <div className="mt-[26px] flex h-6 items-center">
      <input
        id="lock-signal"
        type="checkbox"
        className="ml-[2px] h-[21px] w-[21px] appearance-none rounded border-2 border-[#6a6a6a] bg-[#171717] checked:bg-[#0f96b8]"
      />
      <label htmlFor="lock-signal" className="mr-2 ml-[14px] text-[19px] leading-6">
        Lock Dominant Signal
      </label>
      <HelpButton topic="Lock Dominant Signal" />
    </div>
    <div className="mt-[22px]">
      <SectionTitle text="Wavelets" icon={<ScalesIcon className="h-7 w-7" />} />
    </div>
    <FieldLabel text="Count & Widths" className="mt-[23px] mb-[9px] pl-1" />
    <Slider min="10" max="100" handles={[{ name: 'Wavelet count', text: '100', position: 100, align: 'end' }]} />
    <div className="mt-4 mb-[22px]">
      <Slider
        min="1.0"
        max="0.1"
        handles={[
          { name: 'Width upper', text: '0.8', position: 22.2 },
          { name: 'Width lower', text: '0.2', position: 88.9 },
        ]}
      />
    </div>
    <ApplyButton />
  </Panel>
);

const ChartOptions = () => {
  const [features, setFeatures] = useState(['Model', 'Lowpass']);
  const remove = (name: string) => setFeatures(features.filter((f) => f !== name));

  return (
    <Panel title="Chart Options" icon={<GearIcon />}>
      <FieldLabel text="Time Frequency Type" htmlFor="tf-type" icon={<SpectrumIcon />} className="mt-5 pl-[3px]" />
      <Select id="tf-type" options={['Norm. Magnitude', 'Magnitude', 'Power']} />
      <FieldLabel text="Norm. Bias" icon={<ScalesIcon className="h-[19px] w-[19px]" />} className="mt-[26px] mb-[9px] pl-[3px]" />
      <Slider min="0.5" max="1.5" handles={[{ name: 'Norm. Bias', text: '0.5', position: 0, align: 'start' }]} />
      <FieldLabel text="Chart Features" icon={<PlusIcon />} className="mt-[26px] mb-[14px] pl-[3px]" />
      <div className="flex h-[52px] items-center gap-[11px] rounded bg-[#222222] px-[11px]">
        {features.map((name) =>
          name === 'Lowpass' ? (
            <div key={name} className="relative">
              <FeatureTag name={name} onRemove={() => remove(name)} />
              <div className="pointer-events-none absolute -top-5 -right-[13px] -bottom-[19px] -left-2 rounded-sm border-4 border-[#d6ff22]" />
            </div>
          ) : (
            <FeatureTag key={name} name={name} onRemove={() => remove(name)} />
          ),
        )}
        <button
          type="button"
          aria-label="Clear features"
          onClick={() => setFeatures([])}
          className="ml-auto flex h-[14px] w-[14px] items-center justify-center rounded-full bg-[#8a8aa0] text-[#222222]"
        >
          <X className="h-2 w-2" strokeWidth={4} />
        </button>
        <button type="button" aria-label="Open features" className="-ml-px mr-[6px]">
          <CaretIcon className="w-[10px]" />
        </button>
      </div>
      <FieldLabel text="Options Bar Width" htmlFor="bar-width" icon={<WidthIcon />} className="mt-[26px]" />
      <Select id="bar-width" options={['Slim', 'Wide']} />
      <div className="mt-[21px]">
        <ApplyButton focused />
      </div>
    </Panel>
  );
};

const App = () => (
  <div className="min-h-screen bg-[#111111] pt-[58px] pb-10 font-['Noto_Sans_CJK_SC','Noto_Sans',sans-serif] text-[#e4e4e4]">
    <header className="pl-[66px]">
      <h1 className="inline-block bg-[linear-gradient(135deg,#8bec28_0%,#b8e428_20%,#f0a024_36%,#f98a24_48%,#fb2060_60%,#f0188c_68%,#fb2a3c_76%,#f01c4c_100%)] bg-clip-text font-['Inter',sans-serif] text-[55px] leading-[70px] font-semibold text-transparent">
        sigma-l
      </h1>
    </header>
    <nav className="mt-[57px] ml-[67px] flex gap-[22px] border-b-[3px] border-[#262626] text-base leading-6">
      <a href="#time-frequency" aria-current="page" className="-mb-[3px] border-b-[3px] border-[#1c95b2] pb-[14px] text-[#1c8ba8]">
        Time Frequency
      </a>
      <a href="#wavelets" className="pb-[14px]">
        Wavelets
      </a>
    </nav>
    <main className="mt-5 ml-[67px] flex items-start">
      <aside className="flex w-[491px] shrink-0 flex-col gap-[21px] pt-px">
        <FilterControl />
        <ChartOptions />
      </aside>
      <div className="min-w-0 flex-1">
        <SignalChart />
      </div>
    </main>
  </div>
);

export default App;
